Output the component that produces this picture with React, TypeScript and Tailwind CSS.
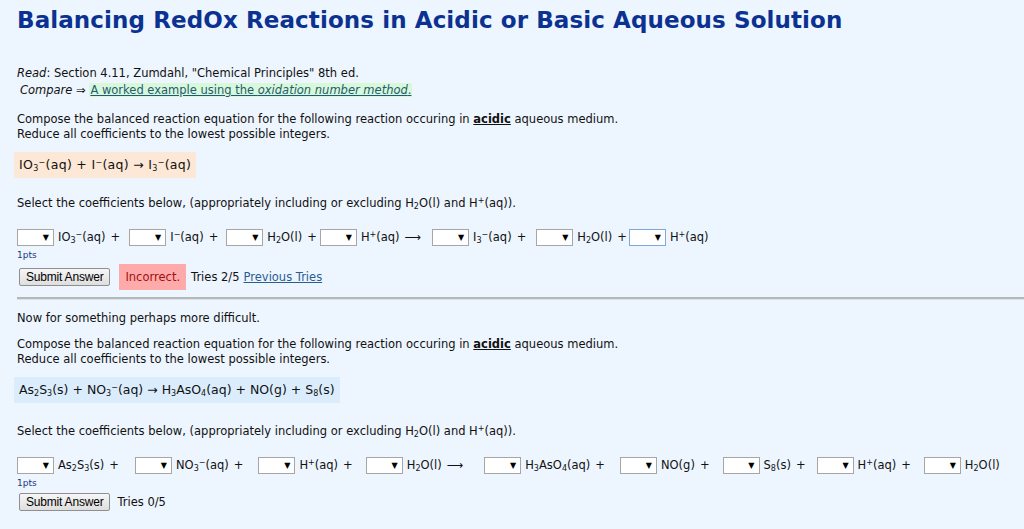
import React from 'react';

const Sel: React.FC<{ focused?: boolean }> = ({ focused }) => (
  <span
    className={`inline-flex items-center justify-end align-middle w-[37px] h-[17px] bg-white border ${
      focused ? 'border-[#7ea6e0]' : 'border-[#a6a6a6]'
    } pr-[4px] mr-[4px]`}
  >
    <span className="text-[8px] leading-none text-black">▼</span>
  </span>
);

const Sub: React.FC<{ children: React.ReactNode }> = ({ children }) => <sub className="text-[8px]">{children}</sub>;
const Sup: React.FC<{ children: React.ReactNode }> = ({ children }) => <sup className="text-[8px]">{children}</sup>;

const Term: React.FC<{ children: React.ReactNode; op?: string; gap?: string }> = ({ children, op, gap = 'mr-[8px]' }) => (
  <span className={`inline-flex items-center ${gap}`}>
    <span>{children}</span>
    {op && <span className="ml-[5px]">{op}</span>}
  </span>
);

const SubmitButton: React.FC = () => (
  <button className="h-[18px] px-[6px] border border-[#8f8f8f] rounded-[2px] bg-gradient-to-b from-[#f6f6f6] to-[#dedede] text-[12px] leading-none text-black tracking-[-0.2px] font-['Liberation_Sans',Arial,sans-serif]">
    Submit Answer
  </button>
);

const Compose: React.FC = () => (
  <p>
    Compose the balanced reaction equation for the following reaction occuring in{' '}
    <b className="underline">acidic</b> aqueous medium.
    <br />
    Reduce all coefficients to the lowest possible integers.
  </p>
);

const SelectLine: React.FC = () => (
  <p>
    Select the coefficients below, (appropriately including or excluding H<Sub>2</Sub>O(l) and H<Sup>+</Sup>(aq)).
  </p>
);

export default function App() {
  return (
    <div className="min-h-[529px] bg-[#edf5fe] text-[#111] text-[11.5px] leading-[15px] font-['DejaVu_Sans',Verdana,sans-serif] pl-[17px] overflow-hidden">
      <h1 className="pt-[5px] text-[23px] leading-[30px] font-bold text-[#0b3191] tracking-[0.1px]">
        Balancing RedOx Reactions in Acidic or Basic Aqueous Solution
      </h1>

      <div className="mt-[31px]">
        <p>
          <i>Read</i>: Section 4.11, Zumdahl, "Chemical Principles" 8th ed.
        </p>
        <p className="mt-[2px] pl-[3px]">
          <i>Compare</i> ⇒{' '}
          <a className="bg-[#d8f8d9] text-[#1e5c73] underline px-[1px]">
            A worked example using the <i>oxidation number method</i>.
          </a>
        </p>
      </div>

      <div className="mt-[14px]">
        <Compose />
      </div>

      <div className="mt-[10px] inline-block bg-[#fde7d6] px-[5px] py-[5px] -ml-[3px] text-[12.5px] leading-[16px] tracking-[0.3px]">
        IO<Sub>3</Sub>
        <Sup>−</Sup>(aq) + I<Sup>−</Sup>(aq) → I<Sub>3</Sub>
        <Sup>−</Sup>(aq)
      </div>

      <div className="mt-[18px]">
        <SelectLine />
      </div>

      <div className="mt-[18px] flex items-center h-[17px]">
        <Sel />
        <Term op="+" gap="mr-[9px]">
          IO<Sub>3</Sub>
          <Sup>−</Sup>(aq)
        </Term>
        <Sel />
        <Term op="+" gap="mr-[8px]">
          I<Sup>−</Sup>(aq)
        </Term>
        <Sel />
        <Term op="+" gap="mr-[3px]">
          H<Sub>2</Sub>O(l)
        </Term>
        <Sel />
        <Term op="⟶" gap="mr-[11px]">
          H<Sup>+</Sup>(aq)
        </Term>
        <Sel />
        <Term op="+" gap="mr-[10px]">
          I<Sub>3</Sub>
          <Sup>−</Sup>(aq)
        </Term>
        <Sel />
        <Term op="+" gap="mr-[2px]">
          H<Sub>2</Sub>O(l)
        </Term>
        <Sel focused />
        <Term>
          H<Sup>+</Sup>(aq)
        </Term>
      </div>
      <div className="mt-[3px] text-[9px] leading-[12px] text-[#1a3580]">1pts</div>
      <div className="mt-[3px] flex items-center h-[26px]">
        <span className="ml-[2px]">
          <SubmitButton />
        </span>
        <span className="ml-[9px] h-[26px] px-[6px] flex items-center bg-[#ffaaaa] text-[#a01010]">Incorrect.</span>
        <span className="ml-[5px]">Tries 2/5</span>
        <a className="ml-[4px] text-[#2a5d94] underline">Previous Tries</a>
      </div>

      <div className="mt-[7px] h-[3px] border-t-[2px] border-[#b6b9bb] border-b border-b-[#dfe3e6]" />

      <p className="mt-[11px]">Now for something perhaps more difficult.</p>

      <div className="mt-[11px]">
        <Compose />
      </div>

      <div className="mt-[10px] inline-block bg-[#dbedfd] px-[5px] py-[5px] -ml-[3px] text-[12.5px] leading-[16px]">
        As<Sub>2</Sub>S<Sub>3</Sub>(s) + NO<Sub>3</Sub>
        <Sup>−</Sup>(aq) → H<Sub>3</Sub>AsO<Sub>4</Sub>(aq) + NO(g) + S<Sub>8</Sub>(s)
      </div>

      <div className="mt-[21px]">
        <SelectLine />
      </div>

      <div className="mt-[18px] flex items-center h-[17px]">
        <Sel />
        <Term op="+" gap="mr-[16px]">
          As<Sub>2</Sub>S<Sub>3</Sub>(s)
        </Term>
        <Sel />
        <Term op="+" gap="mr-[15px]">
          NO<Sub>3</Sub>
          <Sup>−</Sup>(aq)
        </Term>
        <Sel />
        <Term op="+" gap="mr-[13px]">
          H<Sup>+</Sup>(aq)
        </Term>
        <Sel />
        <Term op="⟶" gap="mr-[21px]">
          H<Sub>2</Sub>O(l)
        </Term>
        <Sel />
        <Term op="+" gap="mr-[15px]">
          H<Sub>3</Sub>AsO<Sub>4</Sub>(aq)
        </Term>
        <Sel />
        <Term op="+" gap="mr-[13px]">
          NO(g)
        </Term>
        <Sel />
        <Term op="+" gap="mr-[11px]">
          S<Sub>8</Sub>(s)
        </Term>
        <Sel />
        <Term op="+" gap="mr-[13px]">
          H<Sup>+</Sup>(aq)
        </Term>
        <Sel />
        <Term>
          H<Sub>2</Sub>O(l)
        </Term>
      </div>
      <div className="mt-[3px] text-[9px] leading-[12px] text-[#1a3580]">1pts</div>
      <div className="mt-[3px] flex items-center h-[20px]">
        <span className="ml-[2px]">
          <SubmitButton />
        </span>
        <span className="ml-[7px]">Tries 0/5</span>
      </div>
    </div>
  );
}
